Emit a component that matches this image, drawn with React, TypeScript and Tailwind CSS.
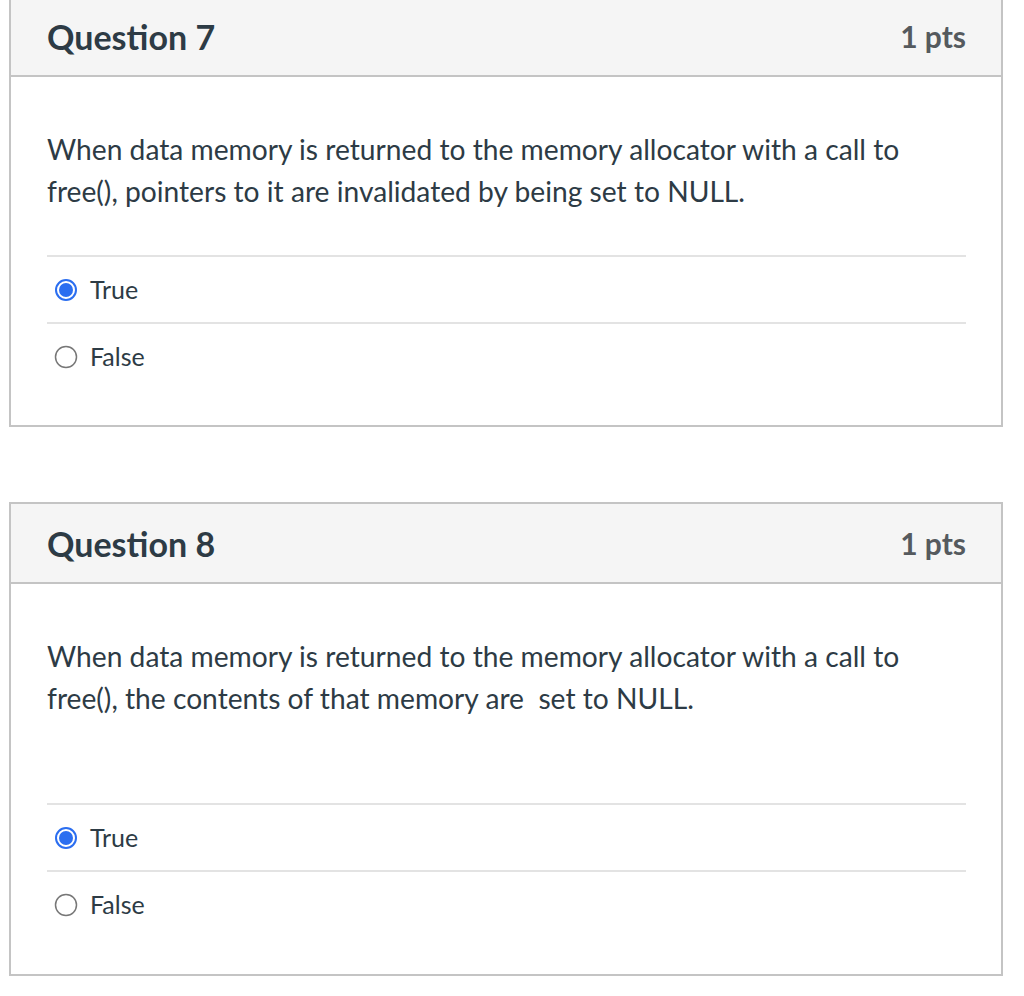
import React from "react";

type Q = { title: string; text: string[]; extraGap?: boolean };

function Radio({ checked }: { checked: boolean }) {
  return checked ? (
    <svg width="24" height="24" viewBox="0 0 24 24" className="shrink-0">
      <circle cx="12" cy="12" r="10" fill="white" stroke="#2b6ef0" strokeWidth="2" />
      <circle cx="12" cy="12" r="7" fill="#2b6ef0" />
    </svg>
  ) : (
    <svg width="24" height="24" viewBox="0 0 24 24" className="shrink-0">
      <circle cx="12" cy="12" r="10.5" fill="white" stroke="#777777" strokeWidth="1.5" />
    </svg>
  );
}

function Option({ label, checked }: { label: string; checked: boolean }) {
  return (
    <div className="border-t-2 border-[#e3e3e3] h-[67px] flex items-center pl-[7px] gap-[12px]">
      <Radio checked={checked} />
      <span className="text-[25px] text-[#2d3b45]">{label}</span>
    </div>
  );
}

function Card({ q, className }: { q: Q; className?: string }) {
  return (
    <div className={"w-[994px] border-2 border-[#c4c4c4] bg-white " + (className ?? "")}>
      <div className="h-[80px] bg-[#f5f5f5] border-b-2 border-[#c4c4c4] flex items-center justify-between pl-[36px] pr-[35px]">
        <span className="text-[34px] font-bold text-[#2d3b45]">{q.title}</span>
        <span className="text-[30px] font-bold text-[#555a5e]">1 pts</span>
      </div>
      <div className="pl-[36px] pr-[35px] pt-[51px]">
        <div className="text-[28.2px] leading-[42px] text-[#2d3b45]">
          {q.text.map((t, i) => (
            <div key={i} className="whitespace-pre">{t}</div>
          ))}
        </div>
        <div className={q.extraGap ? "h-[84px]" : "h-[43px]"} />
        <Option label="True" checked />
        <Option label="False" checked={false} />
        <div className={q.extraGap ? "h-[37px]" : "h-[36px]"} />
      </div>
    </div>
  );
}

export default function App() {
  return (
    <div
      className="w-[1024px] h-[996px] bg-white overflow-hidden pl-[9px]"
      style={{ fontFamily: "Lato, 'Noto Sans', sans-serif" }}
    >
      <Card
        className="mt-[-5px]"
        q={{
          title: "Question 7",
          text: [
            "When data memory is returned to the memory allocator with a call to",
            "free(), pointers to it are invalidated by being set to NULL.",
          ],
        }}
      />
      <Card
        className="mt-[75px]"
        q={{
          title: "Question 8",
          text: [
            "When data memory is returned to the memory allocator with a call to",
            "free(), the contents of that memory are  set to NULL.",
          ],
          extraGap: true,
        }}
      />
    </div>
  );
}
